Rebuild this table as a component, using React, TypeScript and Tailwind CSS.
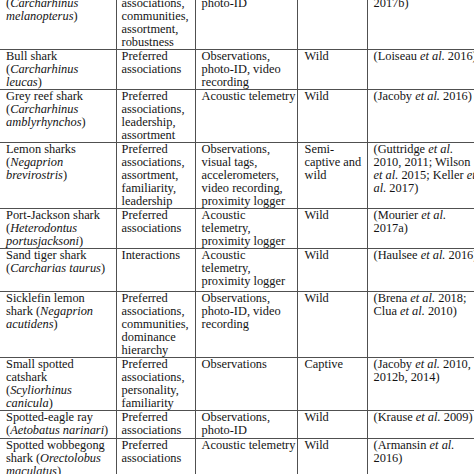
import type { ReactNode } from "react";

type Cell = ReactNode[];
type Row = { cells: [Cell, Cell, Cell, Cell, Cell]; extra?: string };

const EtAl = () => <i>et al.</i>;

const rows: Row[] = [
  {
    cells: [
      ["Blacktip reef shark", <>(<i>Carcharhinus</i></>, <><i>melanopterus</i>)</>],
      ["Preferred", "associations,", "communities,", "assortment,", "robustness"],
      ["Observations,", "photo-ID"],
      ["Wild"],
      [<>(Mourier <EtAl /> 2012,</>, "2017b)"],
    ],
  },
  {
    cells: [
      ["Bull shark", <>(<i>Carcharhinus</i></>, <><i>leucas</i>)</>],
      ["Preferred", "associations"],
      ["Observations,", "photo-ID, video", "recording"],
      ["Wild"],
      [<>(Loiseau <EtAl /> 2016)</>],
    ],
  },
  {
    cells: [
      ["Grey reef shark", <>(<i>Carcharhinus</i></>, <><i>amblyrhynchos</i>)</>],
      ["Preferred", "associations,", "leadership,", "assortment"],
      ["Acoustic telemetry"],
      ["Wild"],
      [<>(Jacoby <EtAl /> 2016)</>],
    ],
  },
  {
    cells: [
      ["Lemon sharks", <>(<i>Negaprion</i></>, <><i>brevirostris</i>)</>],
      ["Preferred", "associations,", "assortment,", "familiarity,", "leadership"],
      ["Observations,", "visual tags,", "accelerometers,", "video recording,", "proximity logger"],
      ["Semi-", "captive and", "wild"],
      [
        <>(Guttridge <EtAl /></>,
        "2010, 2011; Wilson",
        <><EtAl /> 2015; Keller <i>et</i></>,
        <><i>al.</i> 2017)</>,
      ],
    ],
  },
  {
    cells: [
      ["Port-Jackson shark", <>(<i>Heterodontus</i></>, <><i>portusjacksoni</i>)</>],
      ["Preferred", "associations"],
      ["Acoustic", "telemetry,", "proximity logger"],
      ["Wild"],
      [<>(Mourier <EtAl /></>, "2017a)"],
    ],
  },
  {
    extra: "pb-[3px]",
    cells: [
      ["Sand tiger shark", <>(<i>Carcharias taurus</i>)</>],
      ["Interactions"],
      ["Acoustic", "telemetry,", "proximity logger"],
      ["Wild"],
      [<>(Haulsee <EtAl /> 2016)</>],
    ],
  },
  {
    cells: [
      ["Sicklefin lemon", <>shark (<i>Negaprion</i></>, <><i>acutidens</i>)</>],
      ["Preferred", "associations,", "communities,", "dominance", "hierarchy"],
      ["Observations,", "photo-ID, video", "recording"],
      ["Wild"],
      [<>(Brena <EtAl /> 2018;</>, <>Clua <EtAl /> 2010)</>],
    ],
  },
  {
    cells: [
      ["Small spotted", "catshark", <>(<i>Scyliorhinus</i></>, <><i>canicula</i>)</>],
      ["Preferred", "associations,", "personality,", "familiarity"],
      ["Observations"],
      ["Captive"],
      [<>(Jacoby <EtAl /> 2010,</>, "2012b, 2014)"],
    ],
  },
  {
    extra: "pb-[1px]",
    cells: [
      ["Spotted-eagle ray", <>(<i>Aetobatus narinari</i>)</>],
      ["Preferred", "associations"],
      ["Observations,", "photo-ID"],
      ["Wild"],
      [<>(Krause <EtAl /> 2009)</>],
    ],
  },
  {
    cells: [
      ["Spotted wobbegong", <>shark (<i>Orectolobus</i></>, <><i>maculatus</i>)</>],
      ["Preferred", "associations"],
      ["Acoustic telemetry"],
      ["Wild"],
      [<>(Armansin <EtAl /></>, "2016)"],
    ],
  },
];

const pads = ["pl-[6px]", "pl-[5px]", "pl-[6px]", "pl-[7px]", "pl-[6px]"];

export default function App() {
  return (
    <div className="w-[474px] h-[474px] overflow-hidden bg-white">
      <table
        className="mt-[-16px] w-[490px] table-fixed border-collapse text-[12.4px] leading-[13px] text-[#141414]"
        style={{ fontFamily: '"Liberation Serif", "Times New Roman", serif' }}
      >
        <colgroup>
          <col className="w-[116px]" />
          <col className="w-[79px]" />
          <col className="w-[102px]" />
          <col className="w-[70px]" />
          <col className="w-[123px]" />
        </colgroup>
        <tbody>
          {rows.map((row, i) => (
            <tr key={i} className="border-b border-[#505050] align-top">
              {row.cells.map((cell, j) => (
                <td
                  key={j}
                  className={`${pads[j]} pr-[2px] pt-0 ${row.extra ?? "pb-0"} whitespace-nowrap overflow-hidden ${
                    j < 4 ? "border-r border-[#505050]" : ""
                  }`}
                >
                  {cell.map((line, k) => (
                    <div key={k}>{line}</div>
                  ))}
                </td>
              ))}
            </tr>
          ))}
        </tbody>
      </table>
    </div>
  );
}
